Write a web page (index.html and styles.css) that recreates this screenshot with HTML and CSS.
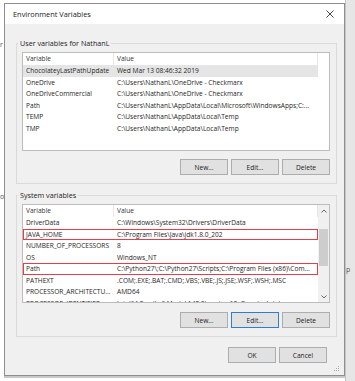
FILE: index.html
```html
<!DOCTYPE html>
<html lang="en">
<head>
  <meta charset="UTF-8">
  <title>Environment Variables</title>
  <link rel="stylesheet" href="styles.css">
</head>
<body>
  <div class="screen">
    <div class="edge edge-left">
      <span class="frag frag-r">r</span>
      <span class="frag frag-o">o</span>
    </div>

    <div class="window">
      <div class="titlebar">
        <span class="title">Environment Variables</span>
        <svg class="close" width="8" height="8" viewBox="0 0 8 8">
          <path d="M0.5 0.5 L7.5 7.5 M7.5 0.5 L0.5 7.5" stroke="#333" stroke-width="0.9" fill="none"/>
        </svg>
      </div>

      <div class="dialog">
        <fieldset class="group">
          <legend>User variables for NathanL</legend>
          <div class="list">
            <div class="table">
              <div class="row head"><span>Variable</span><span>Value</span></div>
              <div class="row selected"><span>ChocolateyLastPathUpdate</span><span>Wed Mar 13 08:46:32 2019</span></div>
              <div class="row"><span>OneDrive</span><span>C:\Users\NathanL\OneDrive - Checkmarx</span></div>
              <div class="row"><span>OneDriveCommercial</span><span>C:\Users\NathanL\OneDrive - Checkmarx</span></div>
              <div class="row"><span>Path</span><span>C:\Users\NathanL\AppData\Local\Microsoft\WindowsApps;C:...</span></div>
              <div class="row"><span>TEMP</span><span>C:\Users\NathanL\AppData\Local\Temp</span></div>
              <div class="row"><span>TMP</span><span>C:\Users\NathanL\AppData\Local\Temp</span></div>
            </div>
            <div class="spare"><div class="spare-head"></div></div>
          </div>
          <div class="buttons">
            <button class="btn">New...</button>
            <button class="btn">Edit...</button>
            <button class="btn">Delete</button>
          </div>
        </fieldset>

        <fieldset class="group group-system">
          <legend>System variables</legend>
          <div class="list">
            <div class="table">
              <div class="row head"><span>Variable</span><span>Value</span></div>
              <div class="row"><span>DriverData</span><span>C:\Windows\System32\Drivers\DriverData</span></div>
              <div class="row marked"><span>JAVA_HOME</span><span>C:\Program Files\Java\jdk1.8.0_202</span></div>
              <div class="row"><span>NUMBER_OF_PROCESSORS</span><span>8</span></div>
              <div class="row"><span>OS</span><span>Windows_NT</span></div>
              <div class="row marked"><span>Path</span><span>C:\Python27\;C:\Python27\Scripts;C:\Program Files (x86)\Com...</span></div>
              <div class="row"><span>PATHEXT</span><span>.COM;.EXE;.BAT;.CMD;.VBS;.VBE;.JS;.JSE;.WSF;.WSH;.MSC</span></div>
              <div class="row"><span>PROCESSOR_ARCHITECTU...</span><span>AMD64</span></div>
              <div class="row"><span>PROCESSOR_IDENTIFIER</span><span>Intel64 Family 6 Model 142 Stepping 10, GenuineIntel</span></div>
            </div>
            <div class="scrollbar">
              <svg class="arrow" width="6" height="4" viewBox="0 0 6 4">
                <path d="M0.5 3.5 L3 1 L5.5 3.5" stroke="#555" stroke-width="0.9" fill="none"/>
              </svg>
              <div class="thumb-track"><div class="thumb"></div></div>
              <svg class="arrow" width="6" height="4" viewBox="0 0 6 4">
                <path d="M0.5 0.5 L3 3 L5.5 0.5" stroke="#555" stroke-width="0.9" fill="none"/>
              </svg>
            </div>
          </div>
          <div class="buttons">
            <button class="btn">New...</button>
            <button class="btn focused">Edit...</button>
            <button class="btn">Delete</button>
          </div>
        </fieldset>

        <div class="buttons footer">
          <button class="btn">OK</button>
          <button class="btn">Cancel</button>
        </div>

        <svg class="grip" width="6" height="6" viewBox="0 0 6 6">
          <rect x="4" y="0" width="1" height="1" fill="#aaa"/>
          <rect x="2" y="2" width="1" height="1" fill="#aaa"/>
          <rect x="4" y="2" width="1" height="1" fill="#aaa"/>
          <rect x="0" y="4" width="1" height="1" fill="#aaa"/>
          <rect x="2" y="4" width="1" height="1" fill="#aaa"/>
          <rect x="4" y="4" width="1" height="1" fill="#aaa"/>
        </svg>
      </div>
    </div>

    <div class="edge edge-right">
      <span class="frag frag-p">p</span>
    </div>
  </div>
</body>
</html>
```

FILE: styles.css
```css
body {
  margin: 0;
  font-family: 'Open Sans', 'Noto Sans', sans-serif;
  font-size: 6.6px;
  color: #1e1e1e;
  background: #fff;
}

.screen {
  display: flex;
  width: 355px;
  height: 381px;
  overflow: hidden;
}

.edge {
  position: relative;
}

.edge-left {
  width: 4px;
  background: #fff;
}

.edge-right {
  flex: 1;
  background: #e6e6e6;
  border-left: 1px solid #c4c4c4;
}

.frag {
  position: absolute;
  font-size: 7px;
  color: #555;
}

.frag-r { left: 0; top: 40px; }
.frag-o { left: 0; top: 192px; }
.frag-p { left: 0; top: 265px; }

.window {
  width: 339px;
  height: 371px;
  margin-top: 3px;
  border: 1px solid #8e8e8e;
  display: flex;
  flex-direction: column;
  box-shadow: 0 2px 0 #c8c8c8;
}

.titlebar {
  height: 20px;
  background: #fff;
  display: flex;
  align-items: center;
  justify-content: space-between;
  padding: 0 10px 0 8px;
}

.title {
  font-size: 7.4px;
  color: #222;
}

.dialog {
  flex: 1;
  background: #f0f0f0;
  padding: 15px 7px 0 11px;
  position: relative;
}

.group {
  margin: 0;
  padding: 5px 6px 8px 5px;
  border: 1px solid #dadada;
  min-width: 0;
}

.group-system {
  margin-top: 7px;
}

.group legend {
  padding: 0 2px;
  margin-left: -4px;
  line-height: 8px;
  font-size: 7.2px;
  color: #222;
}

.list {
  height: 97px;
  border: 1px solid #bcbcbc;
  background: #fff;
  display: flex;
  overflow: hidden;
}

.table {
  width: 295px;
}

.row {
  display: grid;
  grid-template-columns: 91px 204px;
  height: 11.5px;
  line-height: 11.5px;
  white-space: nowrap;
}

.row span {
  padding-left: 3px;
  overflow: hidden;
}

.row.head {
  height: 12px;
  line-height: 12px;
  color: #333;
}

.row.head span {
  border-right: 1px solid #e5e5e5;
}

.row.selected {
  background: #e5e5e5;
}

.row.marked {
  outline: 1.5px solid #e0404c;
  outline-offset: -1px;
}

.spare {
  flex: 1;
}

.spare-head {
  height: 12px;
}

.scrollbar {
  flex: 1;
  background: #f0f0f0;
  display: flex;
  flex-direction: column;
  align-items: center;
  padding: 4px 0 3px;
}

.thumb-track {
  flex: 1;
  width: 100%;
  padding: 16px 1px 0;
  box-sizing: border-box;
}

.thumb {
  height: 37px;
  background: #cdcdcd;
}

.buttons {
  display: flex;
  justify-content: flex-end;
  gap: 3px;
  margin-top: 8px;
}

.group-system .buttons {
  margin-top: 9px;
}

.btn {
  width: 48px;
  height: 16px;
  padding: 0;
  font-family: inherit;
  font-size: 6.6px;
  color: #222;
  background: #e1e1e1;
  border: 1px solid #adadad;
}

.btn.focused {
  border: 1.5px solid #2a7fd0;
}

.footer {
  margin-top: 10px;
  padding-right: 10px;
}

.grip {
  position: absolute;
  right: 4px;
  bottom: 3px;
}
```
